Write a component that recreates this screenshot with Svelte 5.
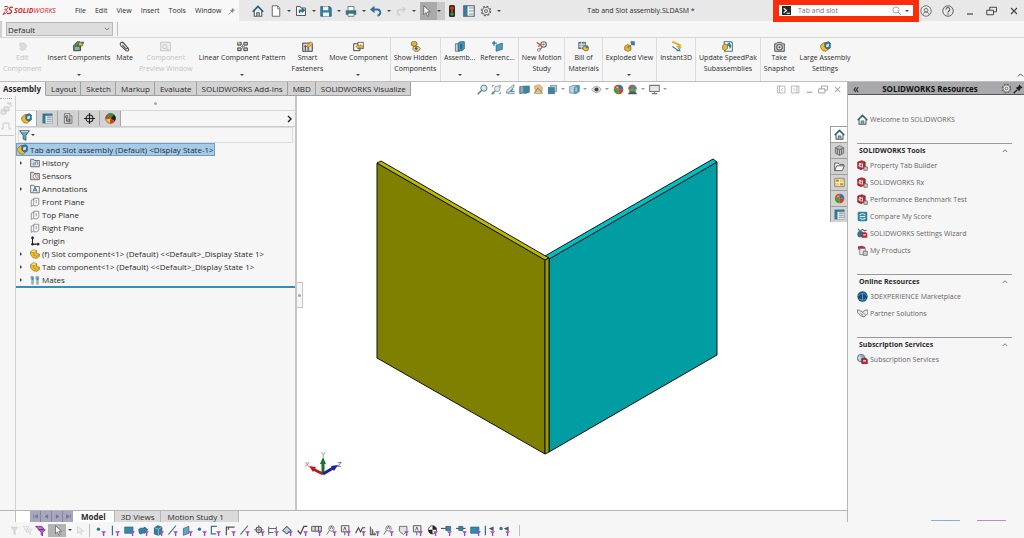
<script lang="ts">
	type Command = { icon: string; label: string; more?: boolean; off?: boolean };
	type TreeItem = { icon: string; label: string; open?: boolean };

	const purple = '<path d="M9 9h7l-2.500 3v4h-2v-4z" fill="#a445cf"/>';

	const icons: Record<string, string> = {
		home: '<path d="M3 8v7h10V8" fill="#fff" stroke="#555" stroke-width="1.500"/><path d="M1 9l7-7 7 7" fill="none" stroke="#1f5f7c" stroke-width="2.200"/><path d="M6 15v-5h4v5" fill="#8aa9b5" stroke="#555"/>',
		file: '<path d="M3 1h7l3 3v11H3z" fill="#fff" stroke="#666" stroke-width="1.300"/><path d="M10 1v4h3" fill="none" stroke="#666"/>',
		open: '<path d="M2 14V2h5l1 2h6v10z" fill="#fff" stroke="#555" stroke-width="1.300"/><path d="M5 11V6h4V3l5 4-5 4V9H7v2z" fill="#2b6f92"/>',
		save: '<path d="M1 2h12l2 2v11H1z" fill="#2f7da3" stroke="#285a72"/><path d="M4 2h7v5H4zM4 10h8v5H4z" fill="#eef3f5"/>',
		print: '<path d="M4 7V2h8v5" fill="#fff" stroke="#555"/><path d="M1 7h14v6H1z" fill="#2f7396"/><path d="M4 11h8v4H4z" fill="#fff" stroke="#555"/>',
		undo: '<path d="M4 6h6c5 0 5 8 0 8" fill="none" stroke="#2f6f93" stroke-width="2.400"/><path d="M6 1v10L0 6z" fill="#2f6f93"/>',
		redo: '<path d="M12 6H7c-5 0-5 7 0 7" fill="none" stroke="#cfcfcf" stroke-width="2"/><path d="M10 2v8l5-4z" fill="#cfcfcf"/>',
		cursor: '<path d="M5 1v12l3-3 2 5 2-1-2-5h4z" fill="#f6f6f6" stroke="#555"/>',
		traffic: '<rect x="4" y="0" width="8" height="16" rx="2" fill="#332a26"/><circle cx="8" cy="4" r="2.500" fill="#d9301c"/><circle cx="8" cy="8" r="1.500" fill="#806425"/><circle cx="8" cy="12" r="2.300" fill="#2f9a3c"/>',
		list: '<path d="M1 1h14v14H1z" fill="#f5f5f5" stroke="#4d6673" stroke-width="1.500"/><path d="M1 1h5v14H1z" fill="#38759a"/><path d="M8 4h6M8 8h6M8 12h6M3 4h1M3 8h1M3 12h1" stroke="#7b98a7" stroke-width="1.500"/>',
		gear: '<circle cx="8" cy="8" r="6" fill="none" stroke="#666" stroke-width="2" stroke-dasharray="2.700 2"/><circle cx="8" cy="8" r="5" fill="#eee" stroke="#666"/><circle cx="8" cy="8" r="2" fill="none" stroke="#666" stroke-width="1.300"/>',
		pin: '<path d="M9 2l5 5-3 1-2 4-5-5 4-2z" fill="#888"/><path d="M6 10l-5 5" stroke="#888" stroke-width="1.500"/>',
		darkPin: '<path d="M9 2l5 5-3 1-2 4-5-5 4-2z" fill="#222"/><path d="M6 10l-5 5" stroke="#222" stroke-width="2"/>',
		terminal: '<path d="M0 0h16v16H0z" fill="#262626"/><path d="M3 4l5 4-5 4M8 13h6" fill="none" stroke="#fff" stroke-width="1.800"/>',
		search: '<circle cx="7" cy="7" r="5.500" fill="none" stroke="#777" stroke-width="1.200"/><path d="M11 11l5 5" stroke="#777" stroke-width="1.400"/>',
		user: '<circle cx="8" cy="8" r="7" fill="none" stroke="#555"/><circle cx="8" cy="7" r="2.500" fill="none" stroke="#555"/><path d="M4 13c0-5 8-5 8 0" fill="none" stroke="#555"/>',
		help: '<circle cx="8" cy="8" r="7" fill="none" stroke="#555" stroke-width="1.200"/><path d="M5.500 6c0-4 5-3 5 0 0 2-2.500 2-2.500 4M8 11v2" fill="none" stroke="#555" stroke-width="1.400"/>',
		minimize: '<path d="M4 12h8" stroke="currentColor" stroke-width="1.600"/>',
		restore: '<path d="M1 7h9v6H1zM5 7V3h9v6h-4" fill="none" stroke="currentColor" stroke-width="1.300"/>',
		close: '<path d="M4 4l8 8M12 4l-8 8" stroke="currentColor" stroke-width="1.500"/>',
		dockLeft: '<path d="M2 3h11v10H2zM5 3v10M10 6L8 8l2 2" fill="none" stroke="currentColor"/>',
		dockRight: '<path d="M2 3h11v10H2zM10 3v10M5 6l2 2-2 2" fill="none" stroke="currentColor"/>',
		editPart: '<path d="M4 3h7l3 4-2 5-6 2-2-3 3-2-3-2z" fill="#ddd" stroke="#ccc"/>',
		insertPart: '<path d="M1 6h10v8H1z" fill="#e8efe9" stroke="#333" stroke-width="1.300"/><path d="M2 8h8v3l-2 3H2z" fill="#8fb39d" stroke="#264c39"/><path d="M3 4l3-3h4v5H3z" fill="#3fa36b" stroke="#264c39"/><path d="M8 2h6v5H8z" fill="#e9bb2f" stroke="#604d1d"/><path d="M12 1h4v3h-4z" fill="#2c87a8"/>',
		mate: '<path d="M5 2l8 8c3 4-1 6-4 3L3 7C0 3 4 0 7 3l5 6c1 2-1 3-2 2L5 6" fill="none" stroke="#555" stroke-width="1.600"/>',
		preview: '<path d="M1 2h14v12H1z" fill="#eee" stroke="#ccc" stroke-width="1.500"/><circle cx="7" cy="8" r="3" fill="none" stroke="#ccc" stroke-width="1.500"/><path d="M9 10l5 5" stroke="#ccc" stroke-width="1.500"/>',
		pattern: '<path d="M1 2h5v4H1zM1 10h5v4H1zM10 2h5v4h-5zM10 10h5v4h-5z" fill="#c5c9ca" stroke="#444" stroke-width="1.400"/><path d="M6 8h5M8 5v6" stroke="#3a7187"/><path d="M1 1h3v3H1z" fill="#e9b938"/>',
		smart: '<path d="M1 3h14v12H1z" fill="#d6d6d6" stroke="#444" stroke-width="1.400"/><path d="M5 6v8M9 8v6M3 8h4" stroke="#555" stroke-width="1.600"/><path d="M8 6l5-5 3 3-5 4-3 1z" fill="#f6b72a" stroke="#c87b19"/>',
		move: '<path d="M1 4h9v10H1z" fill="#fff" stroke="#333" stroke-width="1.300"/><path d="M7 2h8v9H7z" fill="#fff" stroke="#333"/><path d="M4 8l4-3v2h3V5l4 3-4 4v-2H8v2z" fill="#f0ba29" stroke="#76601e" stroke-width=".700"/>',
		hidden: '<path d="M2 2l4-2 4 2v4L6 8 2 6z" fill="#e7b434" stroke="#5d4d28"/><path d="M5 8h7l3 3-3 4H7l-3-3z" fill="#efd078" stroke="#555"/><circle cx="9" cy="11" r="2" fill="#555"/>',
		features: '<path d="M2 4h6v11H2z" fill="#ccd3d6" stroke="#555"/><path d="M6 3l3-2h6v10l-3 3H6z" fill="#4d98b8" stroke="#254e62"/><path d="M9 4h3v8H9z" fill="#206b8e"/>',
		reference: '<path d="M6 6l9-3v9l-9 3z" fill="#4b9dbd" stroke="#286079"/><path d="M3 0v7M0 3h7" stroke="#2879a0" stroke-width="2"/>',
		motion: '<circle cx="11" cy="5" r="4" fill="#eee" stroke="#666" stroke-width="1.600"/><circle cx="11" cy="5" r="1.500" fill="#b3603d"/><path d="M1 2l6 4-4 2M9 9l-5 5" stroke="#b3603d" stroke-width="1.800" fill="none"/><circle cx="4" cy="13" r="2" fill="#eee" stroke="#666"/>',
		bill: '<path d="M1 2h10v9H1z" fill="#75a6bb" stroke="#444"/><path d="M1 5h10M1 8h10M5 2v9" stroke="#e9eef0"/><path d="M7 9l3-2h4l2 3-2 4h-4l-3-2z" fill="#efbd35" stroke="#695623"/><path d="M10 7h4l1 3-3 1z" fill="#3184a6"/>',
		explode: '<path d="M1 8l4-3 5 2v6l-4 2-5-2z" fill="#efb830" stroke="#70591d"/><path d="M4 9l3-1v3" fill="none" stroke="#70591d"/><path d="M10 1h5v5l-4-1z" fill="#3989aa" stroke="#265b72"/><path d="M8 8l3-3" stroke="#555"/>',
		instant: '<path d="M2 1l11 5-3 2 5 2" fill="none" stroke="#e3ad2c" stroke-width="2.800"/><path d="M2 8l9 6M8 14l5 0-2-4" fill="none" stroke="#3c7f97" stroke-width="1.600"/>',
		speedpak: '<path d="M3 1h10l2 2v12H4z" fill="#fff" stroke="#3d7186" stroke-width="1.500"/><path d="M1 7l3-3 4 2v5l-4 3-3-2z" fill="#edb832" stroke="#665322"/><path d="M8 5c5-2 6 4 3 6M8 5l3-2v5z" fill="none" stroke="#2b7a9a" stroke-width="1.600"/>',
		camera: '<path d="M1 4h3l1-2h6l1 2h3v11H1z" fill="#ccc" stroke="#555" stroke-width="1.400"/><circle cx="8" cy="9" r="4" fill="#eee" stroke="#555" stroke-width="1.500"/><circle cx="8" cy="9" r="1.500" fill="#444"/>',
		assembly: '<path d="M1 6l5-4 3 1-1 5 3 2 2 1-4 4-5-1-3-4z" fill="#f1ba2c" stroke="#8b681c"/><path d="M7 3l5-2 3 2v7l-4 2-4-3z" fill="#347e9f" stroke="#245269"/><path d="M9 5l4-1v4l-4 1z" fill="#d7e7ed"/>',
		part: '<path d="M1 4l5-3 5 2-1 4 5 1v4l-4 3-6-1-4-5z" fill="#f2bf31" stroke="#8b681c"/><path d="M1 4l5 2 5-3M6 6v4l5 2 4-4" fill="none" stroke="#a77d1f"/><path d="M2 4l4-2 4 1-4 2z" fill="#ffe383"/>',
		tree: '<path d="M1 1h14v14H1z" fill="#eee" stroke="#8ba0a8"/><path d="M1 1h14v3H1zM1 4h4v11H1z" fill="#2f7595"/><path d="M7 6h7M7 9h7M7 12h7" stroke="#8199a4" stroke-width="1.500"/>',
		config: '<path d="M2 1h8v14H2zM10 4h3v11H6" fill="#ddd" stroke="#777" stroke-width="1.400"/><path d="M4 4h3v3H4zM7 9h3v3H7zM5 7v5h2" fill="none" stroke="#555" stroke-width="1.300"/>',
		target: '<circle cx="8" cy="8" r="5" fill="none" stroke="#222" stroke-width="1.600"/><path d="M8 0v16M0 8h16" stroke="#222" stroke-width="1.600"/>',
		ball: '<circle cx="8" cy="8" r="7" fill="#e5c727"/><path d="M8 8V1a7 7 0 0 0-6.500 5z" fill="#d83c32"/><path d="M8 8V1a7 7 0 0 1 7 7z" fill="#3870bd"/><path d="M8 8h7a7 7 0 0 1-7 7z" fill="#d83c32"/><path d="M8 8v7a7 7 0 0 1-6.500-9z" fill="#3b9d4b"/><circle cx="6" cy="5" r="1.500" fill="#fff" opacity=".600"/>',
		appearance: '<circle cx="8" cy="8" r="7" fill="#e9cb2c" stroke="#555"/><path d="M8 8L3 2a7 7 0 0 1 10 0z" fill="#3b8d3f"/><path d="M8 8l5-6a7 7 0 0 1 1 10z" fill="#222"/><path d="M8 8L3 2a7 7 0 0 0-2 7z" fill="#d13a30"/><path d="M8 8l6 4a7 7 0 0 1-7 3z" fill="#d13a30"/>',
		filter: '<path d="M1 1h14l-5 7v7l-4-2V8z" fill="#71a2b8" stroke="#315a6c" stroke-width="1.300"/><path d="M3 2h10" stroke="#fff"/>',
		history: '<path d="M1 14V2h5l1 2h8v10z" fill="#ddd" stroke="#666" stroke-width="1.400"/><path d="M5 11V8h3v3zM9 11V6h3v5" fill="#fff" stroke="#397692"/>',
		sensors: '<path d="M1 14V2h5l1 2h8v10z" fill="#ddd" stroke="#666" stroke-width="1.400"/><circle cx="9" cy="9" r="4" fill="#fff" stroke="#8a5656"/><path d="M9 6v4h2" stroke="#b34242" fill="none"/>',
		notes: '<path d="M1 14V2h5l1 2h8v10z" fill="#e9eef0" stroke="#666" stroke-width="1.400"/><path d="M5 12l3-7 3 7M6 10h4" fill="none" stroke="#2d6b88" stroke-width="1.500"/>',
		plane: '<path d="M2 5l4-1v9l-4 2zM6 2h8v10l-3 2H6" fill="#fafafa" stroke="#777" stroke-width="1.200"/><path d="M6 2v3M10 5v5" stroke="#777" stroke-width="1.200"/>',
		origin: '<path d="M4 1v12h11M4 1L2 4M4 1l2 3M15 13l-3-2M15 13l-3 2" fill="none" stroke="#222" stroke-width="1.700"/><circle cx="4" cy="13" r="2" fill="#222"/>',
		mates: '<path d="M3 1c5 0 4 5 3 7v6c0 2-4 2-4 0V8C0 5 0 1 3 1zM11 1c5 0 4 5 3 7v6c0 2-4 2-4 0V8c-2-3-2-7 1-7z" fill="#91afbd"/><path d="M3 4h2v4H3zM11 4h2v4h-2z" fill="#4c829b"/>',
		zoomFit: '<circle cx="10" cy="6" r="4.500" fill="#dceaf0" stroke="#5a7a89" stroke-width="1.400"/><path d="M7 9l-6 6" stroke="#5a7a89" stroke-width="2"/>',
		zoomArea: '<path d="M2 5V2h3M11 2h3v3M2 11v3h3M14 11v3h-3" fill="none" stroke="#777"/><circle cx="9" cy="7" r="4" fill="#dceaf0" stroke="#6c8793"/><path d="M6 10l-5 5" stroke="#5a7a89" stroke-width="2"/>',
		prevView: '<path d="M13 1L3 9l-1 4 4-1 7-8zM4 14h10" fill="#dfeaf0" stroke="#718b97" stroke-width="1.300"/><path d="M12 7l-4 4h6" fill="none" stroke="#4a8fae" stroke-width="1.700"/>',
		section: '<path d="M1 4l6-1v10l-6 1z" fill="#6b9bb1" stroke="#416474"/><path d="M8 3h7v9l-7 2z" fill="#3687ac" stroke="#416474"/><path d="M4 4v8" stroke="#cce"/>',
		dynamic: '<path d="M2 3l7-2 5 4-2 9H4z" fill="#f5c072" stroke="#b39468"/><path d="M2 14l5-8 3 3 4 5" fill="none" stroke="#8095a0" stroke-width="1.600"/>',
		orient: '<path d="M2 5h9v9H2z" fill="#3686aa" stroke="#405e6c"/><path d="M5 2h9v9h-3V5H5z" fill="#b9d3df" stroke="#567987"/>',
		display: '<path d="M1 4l5-2h9v9l-5 3-9-1z" fill="#bcd7e2" stroke="#577784"/><path d="M7 5l4-3h4v9l-5 3H7z" fill="#5595b1"/><path d="M9 5h3v6H9z" fill="#9fc6d6"/>',
		eye: '<path d="M1 8c4-6 10-6 14 0-4 6-10 6-14 0z" fill="#e3e3e3" stroke="#888"/><circle cx="8" cy="8" r="3" fill="#444"/>',
		scene: '<circle cx="8" cy="7" r="6" fill="#56a75b"/><path d="M8 7V1a6 6 0 0 1 6 6z" fill="#4682c1"/><path d="M8 7V1a6 6 0 0 0-6 6z" fill="#d7473c"/><path d="M1 15l3-4h8l3 4z" fill="#555"/>',
		monitor: '<path d="M1 2h14v9H1zM8 11v3M4 14h8" fill="#e7e7e7" stroke="#777" stroke-width="1.500"/>',
		library: '<path d="M2 4l6-3 6 3v8l-6 3-6-3z" fill="#b7b7b7" stroke="#555"/><path d="M2 4l6 3 6-3M8 7v8M5 5v8M11 5v8" fill="none" stroke="#555"/>',
		folder: '<path d="M1 14V3h5l2 2h6v2M1 14l3-7h11l-3 7z" fill="#f7f7f7" stroke="#555" stroke-width="1.300"/>',
		palette: '<path d="M1 2h14v12H1z" fill="#ead079" stroke="#777"/><path d="M3 4h4v3H3zM9 9h4v3H9z" fill="#c4961a"/><path d="M8 3v10M2 8h12" stroke="#fff"/>',
		redCube: '<path d="M1 3l6-2 5 2v8l-6 3-5-2z" fill="#b82a35" stroke="#7b1f28"/><path d="M3 5h3v2H3v2h3v2M8 5v6" fill="none" stroke="#fff" stroke-width="1.200"/><path d="M10 10h5v5h-5z" fill="#ccc" stroke="#555"/>',
		score: '<rect x="1" y="1" width="14" height="14" rx="2" fill="#36839f"/><path d="M4 6c2-3 6-2 8 0M12 10c-2 3-6 2-8 0M4 8h8" stroke="#d3eef6" stroke-width="1.500" fill="none"/>',
		wizard: '<path d="M2 1l2 4 4-3 3 2 3-1" fill="none" stroke="#666" stroke-width="1.700"/><circle cx="5" cy="9" r="4.500" fill="#33748c"/><path d="M7 6h6l2 2v6H7z" fill="#b92937"/><path d="M9 10h4" stroke="#fff" stroke-width="1.500"/>',
		products: '<path d="M1 2l6-1 5 2v4H2z" fill="#b92e3b"/><path d="M4 5h8v9H4z" fill="#ececec" stroke="#666"/><path d="M9 9h6v6H9z" fill="#ccc" stroke="#555"/>',
		globe: '<circle cx="8" cy="8" r="7.500" fill="#164f7a"/><path d="M2 7c4-5 8-5 12 0M3 11c3 3 7 3 10 0M8 3v10" stroke="#5fa4ca" fill="none" stroke-width="1.300"/>',
		partner: '<path d="M0 3h3l5 3 4-3h4v5l-6 5-5-2-4-4z" fill="#e7e7e7" stroke="#666" stroke-width="1.200"/><path d="M5 8l4 3M8 6l4 4" stroke="#666"/>',
		subscription: '<circle cx="6" cy="6" r="5.500" fill="#8fb0c0" stroke="#42677b"/><path d="M4 2v8M1 6h9" stroke="#eef" stroke-width="1.300"/><path d="M7 6h6l2 2v6H7z" fill="#ba2937" stroke="#711b24"/><path d="M9 9h4v2H9z" fill="#eee"/>',
		ghostFunnel: '<path d="M3 3h10l-4 5v6l-2-1V8z" fill="#ddd" stroke="#ccc"/>',
		ghostSheets: '<path d="M2 2h8l-3 5v4zM8 6h7l-3 4v4z" fill="#f1f1f1" stroke="#ccc"/>',
		purpleSheets: '<path d="M1 2h9l3 4-7 1zM5 7h10l-4 4v5l-2-2v-4z" fill="#c268d8" stroke="#71328a" stroke-width="1.300"/>',
		ghostCursor: '<path d="M5 2v10l3-2 3 4-1-5h4z" fill="#ececec" stroke="#ccc"/>',
		fVertex: '<circle cx="5" cy="6" r="2.500" fill="#2e7798"/>' + purple,
		fEdge: '<path d="M5 1v14" stroke="#35718b" stroke-width="1.800"/>' + purple,
		fFace: '<path d="M1 3h12v9H1z" fill="#358bad" stroke="#275c72"/>' + purple,
		fSurface: '<path d="M1 7c3-5 5 0 9-4l4 4-4 5c-4-2-5 3-8 0z" fill="#2f839f" stroke="#24556a"/>' + purple,
		fSolid: '<path d="M2 4l5-3 6 2v9l-5 3-6-2z" fill="#327f9f" stroke="#234b5d"/><path d="M2 4l6 2 5-3M8 6v9" stroke="#a5d0df" fill="none"/>' + purple,
		fAxis: '<path d="M2 14L13 1" stroke="#4c7383" stroke-width="1.500"/>' + purple,
		fPlane: '<path d="M2 5l8-3v10l-8 3z" fill="#62a6bd" stroke="#385c6b"/>' + purple,
		fSketch: '<path d="M10 2H2v11h7" fill="none" stroke="#397b97" stroke-width="1.800"/>' + purple,
		fSegment: '<path d="M2 15V3h12M5 3v4" fill="none" stroke="#555" stroke-width="1.800"/>' + purple,
		fMid: '<circle cx="7" cy="7" r="4" fill="#eee" stroke="#555" stroke-width="1.500"/><path d="M7 0v14M0 7h14" stroke="#555"/>' + purple,
		fDimension: '<path d="M1 2v12M12 2v7M1 5h11M1 11h7" stroke="#666" stroke-width="1.500"/>' + purple,
		fHatch: '<path d="M1 8l6-6 6 6-6 5z" fill="#c0d5dd" stroke="#40616d" stroke-width="1.500"/>' + purple,
		fFinish: '<path d="M1 8l4 5L10 2h5" fill="none" stroke="#444" stroke-width="1.800"/>' + purple,
		fTolerance: '<path d="M1 2h14v7H1zM6 2v7M11 2v7" fill="#ddd" stroke="#555" stroke-width="1.400"/>' + purple,
		fNote: '<circle cx="8" cy="5" r="4" fill="#eee" stroke="#666"/><path d="M5 8l-4 6M6 6l2-4 2 4" stroke="#444" fill="none"/>' + purple,
		fDatum: '<path d="M2 1h11v9H2zM7 10v5" fill="#eee" stroke="#555" stroke-width="1.400"/><path d="M5 8l2-5 2 5" stroke="#333" fill="none"/>' + purple,
		fWeld: '<path d="M1 12L5 4l3 6 3-6h4" fill="none" stroke="#444" stroke-width="1.600"/>' + purple,
		fBlock: '<path d="M2 2v12h8M5 6v7h5" fill="#bbb" stroke="#666" stroke-width="1.500"/>' + purple,
		fShield: '<path d="M2 2h11v7l-5 5-6-5z" fill="#e3e3e3" stroke="#666" stroke-width="1.300"/>' + purple,
		fMass: '<circle cx="8" cy="7" r="6" fill="#fff" stroke="#222"/><path d="M8 7V1a6 6 0 0 1 6 6zM8 7v6a6 6 0 0 1-6-6z" fill="#222"/>' + purple,
		fRoute: '<path d="M0 5h7" stroke="#555" stroke-width="1.600"/><path d="M7 2h7v6H7z" fill="#3b83a0" stroke="#31586a"/>' + purple,
		fPoint: '<path d="M0 5h14" stroke="#555" stroke-width="1.600"/><path d="M4 2h6v6H4z" fill="#3b83a0" stroke="#31586a"/>' + purple,
		fEdgeFlag: '<path d="M2 1v14" stroke="#35718b" stroke-width="1.800"/><path d="M14 2v7L7 5z" fill="#555"/>' + purple,
		fVertexFlag: '<circle cx="3" cy="5" r="2.500" fill="#2e7798"/><path d="M14 2v7L7 5z" fill="#555"/>' + purple
	};

	const menus = ['File', 'Edit', 'View', 'Insert', 'Tools', 'Window'];

	const quick = [
		{ icon: 'file', label: 'New' },
		{ icon: 'open', label: 'Open' },
		{ icon: 'save', label: 'Save' },
		{ icon: 'print', label: 'Print' },
		{ icon: 'undo', label: 'Undo' },
		{ icon: 'redo', label: 'Redo' },
		{ icon: 'cursor', label: 'Select', active: true }
	];

	const ribbon: Command[][] = [
		[
			{ icon: 'editPart', label: 'Edit\nComponent', off: true },
			{ icon: 'insertPart', label: 'Insert Components', more: true },
			{ icon: 'mate', label: 'Mate' },
			{ icon: 'preview', label: 'Component\nPreview Window', off: true },
			{ icon: 'pattern', label: 'Linear Component Pattern', more: true },
			{ icon: 'smart', label: 'Smart\nFasteners' },
			{ icon: 'move', label: 'Move Component', more: true }
		],
		[{ icon: 'hidden', label: 'Show Hidden\nComponents' }],
		[
			{ icon: 'features', label: 'Assemb...', more: true },
			{ icon: 'reference', label: 'Referenc...', more: true }
		],
		[{ icon: 'motion', label: 'New Motion\nStudy' }],
		[{ icon: 'bill', label: 'Bill of\nMaterials' }],
		[{ icon: 'explode', label: 'Exploded View', more: true }],
		[{ icon: 'instant', label: 'Instant3D' }],
		[{ icon: 'speedpak', label: 'Update SpeedPak\nSubassemblies' }],
		[
			{ icon: 'camera', label: 'Take\nSnapshot' },
			{ icon: 'assembly', label: 'Large Assembly\nSettings' }
		]
	];

	const tabs = ['Assembly', 'Layout', 'Sketch', 'Markup', 'Evaluate', 'SOLIDWORKS Add-Ins', 'MBD', 'SOLIDWORKS Visualize'];

	const viewTools = [
		{ icon: 'zoomFit' },
		{ icon: 'zoomArea' },
		{ icon: 'prevView' },
		{ icon: 'section' },
		{ icon: 'dynamic' },
		{ icon: 'orient', more: true },
		{ icon: 'display', more: true },
		{ icon: 'eye', more: true },
		{ icon: 'ball' },
		{ icon: 'scene', more: true },
		{ icon: 'monitor', more: true }
	];

	const managers = ['assembly', 'tree', 'config', 'target', 'appearance'];

	const tree: TreeItem[] = [
		{ icon: 'history', label: 'History', open: true },
		{ icon: 'sensors', label: 'Sensors' },
		{ icon: 'notes', label: 'Annotations', open: true },
		{ icon: 'plane', label: 'Front Plane' },
		{ icon: 'plane', label: 'Top Plane' },
		{ icon: 'plane', label: 'Right Plane' },
		{ icon: 'origin', label: 'Origin' },
		{ icon: 'part', label: '(f) Slot component<1> (Default) <<Default>_Display State 1>', open: true },
		{ icon: 'part', label: 'Tab component<1> (Default) <<Default>_Display State 1>', open: true },
		{ icon: 'mates', label: 'Mates', open: true }
	];

	const paneTabs = ['home', 'library', 'folder', 'palette', 'ball', 'tree'];

	const sections = [
		{
			title: 'SOLIDWORKS Tools',
			links: [
				['redCube', 'Property Tab Builder'],
				['redCube', 'SOLIDWORKS Rx'],
				['redCube', 'Performance Benchmark Test'],
				['score', 'Compare My Score'],
				['wizard', 'SOLIDWORKS Settings Wizard'],
				['products', 'My Products']
			]
		},
		{
			title: 'Online Resources',
			links: [
				['globe', '3DEXPERIENCE Marketplace'],
				['partner', 'Partner Solutions']
			]
		},
		{
			title: 'Subscription Services',
			links: [['subscription', 'Subscription Services']]
		}
	];

	const filters = [
		'fVertex', 'fEdge', 'fFace', 'fSurface', 'fSolid', 'fAxis', 'fPlane', 'fVertex', 'fSketch', 'fSegment',
		'fAxis', 'fMid', 'fDimension', 'fHatch', 'fFinish', 'fTolerance', 'fNote', 'fDatum', 'fWeld', 'fBlock',
		'fNote', 'fShield', 'fDatum', 'fMass', 'fRoute', 'fPoint', 'fFace', 'fEdgeFlag', 'fVertexFlag'
	];

	let query = $state('Tab and slot');
	let config = $state('Default');
</script>

{#snippet icon(name: string)}
	<svg class="icon" viewBox="0 0 16 16" aria-hidden="true">{@html icons[name]}</svg>
{/snippet}

<div class="app">
	<header class="titlebar">
		<div class="brand">
			<svg class="ds" viewBox="0 0 24 20" aria-hidden="true">
				<path d="M5 2h6c3 1 0 5-4 7 5 0 4 4 0 7l-5 2 4-6M5 9l3-3" fill="none" stroke="#d5292c" stroke-width="2" />
				<path d="M22 4c-7-2-9 3-5 5 5 3 1 8-7 7" fill="none" stroke="#d5292c" stroke-width="2.5" />
			</svg>
			<span class="logo"><b>SOLID</b>WORKS</span>
			<nav>
				{#each menus as menu}
					<button>{menu}</button>
				{/each}
			</nav>
			<span class="small">{@render icon('pin')}</span>
		</div>
		<div class="quick">
			<button class="home" aria-label="Home">{@render icon('home')}</button>
			{#each quick as tool}
				<button class="drop" class:active={tool.active} aria-label={tool.label}>
					{@render icon(tool.icon)}<i class="arrow"></i>
				</button>
			{/each}
			<div class="options">
				<button aria-label="Rebuild">{@render icon('traffic')}</button>
				<button aria-label="File properties">{@render icon('list')}</button>
				<button class="drop" aria-label="Options">{@render icon('gear')}<i class="arrow"></i></button>
			</div>
		</div>
		<h1>Tab and Slot assembly.SLDASM *</h1>
		<label class="search">
			{@render icon('terminal')}
			<input type="text" aria-label="Search" bind:value={query} />
			{@render icon('search')}<i class="arrow"></i>
		</label>
		<div class="window">
			{#each ['user', 'help', 'minimize', 'restore', 'close'] as name}
				<button aria-label={name}>{@render icon(name)}</button>
			{/each}
		</div>
	</header>

	<div class="configbar">
		<div class="select">
			<select aria-label="Configuration" bind:value={config}>
				<option>Default</option>
			</select>
			<svg viewBox="0 0 8 5" aria-hidden="true"><path d="M1 1l3 3 3-3" fill="none" stroke="#666" /></svg>
		</div>
	</div>

	<div class="ribbon">
		{#each ribbon as group}
			<div class="group">
				{#each group as command}
					<button class="command" class:off={command.off} disabled={command.off}>
						{@render icon(command.icon)}
						<span class="label">{command.label}</span>
						{#if command.more}<i class="arrow"></i>{/if}
					</button>
				{/each}
			</div>
		{/each}
		<button class="collapse" aria-label="Collapse">
			<svg viewBox="0 0 8 5" aria-hidden="true"><path d="M1 4l3-3 3 3" fill="none" stroke="#444" /></svg>
		</button>
	</div>

	<main>
		<div class="document">
			<div class="tabrow">
				<div class="tabs">
					{#each tabs as tab, i}
						<button class:current={i === 0}>{tab}</button>
					{/each}
				</div>
				<div class="viewtools">
					{#each viewTools as tool}
						<button aria-label={tool.icon}>
							{@render icon(tool.icon)}
							{#if tool.more}<i class="arrow"></i>{/if}
						</button>
					{/each}
				</div>
				<div class="doccontrols">
					{#each ['dockLeft', 'dockRight', 'minimize', 'restore', 'close'] as name}
						<button aria-label={name}>{@render icon(name)}</button>
					{/each}
				</div>
			</div>

			<div class="workspace">
				<aside class="strip">
					<svg viewBox="0 0 12 32" aria-hidden="true">
						<path d="M1 11h5v4H1zM4 8h5v4H4zM7 4h4v4" fill="#e5e5e5" stroke="#ccc" />
						<path d="M1 30h2v-6h6v6h2" fill="none" stroke="#ccc" />
					</svg>
				</aside>
				<section class="manager">
					<div class="splitter"><span></span></div>
					<div class="managertabs">
						{#each managers as name, i}
							<button class:current={i === 0} aria-label={name}>{@render icon(name)}</button>
						{/each}
						<button class="next" aria-label="More">
							<svg viewBox="0 0 5 8" aria-hidden="true"><path d="M1 1l3 3-3 3" fill="none" stroke="#222" stroke-width="1.4" /></svg>
						</button>
					</div>
					<button class="filter" aria-label="Filter">{@render icon('filter')}<i class="arrow"></i></button>
					<button class="root">
						{@render icon('assembly')}Tab and Slot assembly (Default) &lt;Display State-1&gt;
					</button>
					<ul class="tree">
						{#each tree as item}
							<li>
								<i class:expand={item.open}></i>
								{@render icon(item.icon)}
								<span>{item.label}</span>
							</li>
						{/each}
					</ul>
					<button class="handle" aria-label="Hide tree"><span></span></button>
				</section>
				<div class="viewport">
					<svg class="model" viewBox="297 96 533 414" role="img" aria-label="Tab and slot model">
						<g stroke="#111" stroke-width="1" stroke-linejoin="round">
							<path d="M549 259L717 162V355L549 452z" fill="#009da3" />
							<path d="M545 256L713 159L717 162L549 259z" fill="#00bfc4" />
							<path d="M377 163L545 260V454L377 358z" fill="#808000" />
							<path d="M377 163L381 161L549 258L545 260z" fill="#b9ba00" />
							<path d="M545 260L549 258V452L545 454z" fill="#9c9c00" />
						</g>
						<g fill="none" stroke-width="3">
							<path d="M323 474l-10-5" stroke="#b3201e" />
							<path d="M323 474v-12" stroke="#177622" />
							<path d="M323 474l10-6" stroke="#1f1fa0" />
						</g>
						<path d="M309 466l7 1-3 5z" fill="#b3201e" />
						<path d="M320 464l3-7 3 7z" fill="#177622" />
						<path d="M338 465l-7 1 3 5z" fill="#1f1fa0" />
						<g class="axes">
							<text x="305" y="467" fill="#e04a4a">X</text>
							<text x="321" y="457" fill="#3f9345">Y</text>
							<text x="337" y="467" fill="#3939d8">Z</text>
						</g>
					</svg>
					<div class="panetabs">
						{#each paneTabs as name, i}
							<button class:current={i === 0} aria-label={name}>{@render icon(name)}</button>
						{/each}
					</div>
				</div>
			</div>

			<div class="sheets">
				<div class="sheetbox">
					<div class="pager">
						{#each ['M7 1L3 4l4 3zM1 1v6', 'M6 1L2 4l4 3z', 'M2 1l4 3-4 3z', 'M1 1l4 3-4 3zM7 1v6'] as d}
							<button aria-label="Scroll tabs">
								<svg viewBox="0 0 8 8" aria-hidden="true"><path {d} fill="#73738c" stroke="#73738c" /></svg>
							</button>
						{/each}
					</div>
					<button class="current">Model</button>
					<button>3D Views</button>
					<button>Motion Study 1</button>
				</div>
			</div>
		</div>

		<aside class="pane">
			<header>
				<span class="back">«</span>
				<h2>SOLIDWORKS Resources</h2>
				{@render icon('gear')}
				{@render icon('darkPin')}
			</header>
			<div class="panebody">
				<a class="welcome" href="#welcome">{@render icon('home')}Welcome to SOLIDWORKS</a>
				{#each sections as section}
					<section>
						<h3>
							{section.title}
							<svg viewBox="0 0 8 5" aria-hidden="true"><path d="M1 4l3-3 3 3" fill="none" stroke="#555" /></svg>
						</h3>
						{#each section.links as [name, text]}
							<a href="#resources">{@render icon(name)}{text}</a>
						{/each}
					</section>
				{/each}
			</div>
			<div class="legend"><span></span><span></span></div>
		</aside>
	</main>

	<footer>
		<div class="selection">
			<button aria-label="Filter off">{@render icon('ghostFunnel')}</button>
			<button aria-label="Clear filters">{@render icon('ghostSheets')}</button>
			<button aria-label="All filters">{@render icon('purpleSheets')}</button>
			<button class="active" aria-label="Select">{@render icon('cursor')}</button>
			<i class="arrow"></i>
			<button aria-label="Magnify">{@render icon('ghostCursor')}</button>
		</div>
		<div class="filters">
			{#each filters as name}
				<button aria-label={name}>{@render icon(name)}</button>
			{/each}
		</div>
	</footer>
</div>

<style>
	:global(body) {
		margin: 0;
	}

	.app {
		--bg: #f6f6f6;
		--line: #bdbdbd;
		--tab: #d2d2d2;

		display: flex;
		flex-direction: column;
		min-height: 100vh;
		background: var(--bg);
		color: #2b2b2b;
		font: 7px/11px 'Open Sans', 'Noto Sans', sans-serif;
		white-space: nowrap;
	}

	button,
	input,
	select {
		font: inherit;
		color: inherit;
		margin: 0;
		padding: 0;
		border: 0;
		background: none;
	}

	button {
		display: flex;
		align-items: center;
		justify-content: center;
	}

	h1,
	h2,
	h3,
	ul {
		margin: 0;
		padding: 0;
		font-size: inherit;
		font-weight: 400;
	}

	.icon {
		display: block;
		flex: none;
		width: 11px;
		height: 11px;
	}

	.arrow {
		flex: none;
		border: 2px solid transparent;
		border-top-color: #444;
		border-bottom: 0;
	}

	/* Title bar */
	.titlebar {
		display: flex;
		height: 21px;
		background: #e8e8e8;
	}

	.brand {
		display: flex;
		align-items: center;
		width: 237px;
		padding-left: 2px;
		background: #f8f8f8;
	}

	.ds {
		width: 12px;
		height: 11px;
	}

	.logo {
		color: #d5292c;
		font-style: italic;
	}

	nav {
		display: flex;
		gap: 9px;
		margin-left: 19px;
	}

	.small {
		margin-left: 7px;
	}

	.small .icon {
		width: 8px;
		height: 8px;
	}

	.quick {
		display: flex;
		align-items: center;
		padding-left: 13px;
	}

	.quick .icon,
	.window .icon {
		width: 12px;
		height: 12px;
	}

	.home {
		margin-right: 6px;
	}

	.drop {
		width: 25px;
		height: 18px;
		justify-content: flex-start;
	}

	.drop .arrow {
		margin-left: 5px;
	}

	.drop.active {
		background: linear-gradient(90deg, #aaa 17px, #c8c8c8 17px);
	}

	.options {
		display: flex;
		align-items: center;
		gap: 5px;
		margin-left: 1px;
	}

	h1 {
		flex: 1;
		align-self: center;
		padding-left: 4px;
		text-align: center;
	}

	.search {
		display: flex;
		align-items: center;
		box-sizing: border-box;
		width: 146px;
		height: 22px;
		padding: 0 4px 0 3px;
		border: solid #fb2c0a;
		border-width: 5px 6px 6px;
		background: #fff;
		z-index: 1;
	}

	.search .icon {
		width: 9px;
		height: 9px;
	}

	.search input {
		flex: 1;
		min-width: 0;
		padding-left: 7px;
		color: #777;
		outline: 0;
	}

	.search .arrow {
		margin-left: 4px;
	}

	.window {
		display: flex;
		align-items: center;
		gap: 10px;
		padding: 0 4px 0 1px;
		color: #444;
	}

	/* Configuration drop-down */
	.configbar {
		display: flex;
		align-items: center;
		height: 16px;
		border-bottom: 1px solid #d6d6d6;
		border-left: 2px solid #d0d0d0;
	}

	.select {
		position: relative;
		width: 116px;
		padding: 0 4px;
		border-right: 1px solid var(--line);
		box-sizing: border-box;
	}

	select {
		display: block;
		box-sizing: border-box;
		width: 100%;
		height: 14px;
		padding-left: 1px;
		border: 1px solid #b8b8b8;
		background: #dcdcdc;
		font-size: 8px;
		appearance: none;
	}

	.select svg {
		position: absolute;
		top: 5px;
		right: 7px;
		width: 6px;
	}

	/* Ribbon */
	.ribbon {
		display: flex;
		height: 43px;
		border-bottom: 1px solid var(--line);
	}

	.group {
		display: flex;
		gap: 5px;
		padding: 0 3px;
		border-right: 1px solid #dcdcdc;
	}

	.group:first-child {
		gap: 6px;
		padding-right: 2px;
	}

	.group:nth-last-child(2) {
		border: 0;
	}

	.command {
		flex-direction: column;
		justify-content: flex-start;
		padding-top: 3px;
	}

	.command .label {
		white-space: pre;
	}

	.command .arrow {
		margin-top: auto;
		margin-bottom: 5px;
	}

	.off {
		color: #c4c4c4;
	}

	.collapse {
		margin-left: auto;
		align-items: flex-end;
		padding-bottom: 4px;
	}

	.collapse svg {
		width: 7px;
	}

	main {
		display: flex;
		flex: 1;
	}

	.document {
		display: flex;
		flex: 1;
		flex-direction: column;
		background: #fff;
	}

	.tabrow {
		display: flex;
		align-items: center;
		height: 14px;
	}

	.tabs {
		display: flex;
		height: 14px;
		font-size: 8px;
	}

	.tabs button {
		padding: 0 4px 0 5px;
		border: solid #a0a0a0;
		border-width: 0 1px 1px 0;
		background: var(--tab);
	}

	.tabs .current {
		padding-left: 3px;
		border-bottom-color: var(--bg);
		background: var(--bg);
		font-weight: 700;
	}

	.viewtools {
		display: flex;
		gap: 3px;
		margin-left: 66px;
	}

	.viewtools button {
		gap: 3px;
	}

	.viewtools .arrow {
		margin-right: 1px;
		border-top-color: #999;
	}

	.doccontrols {
		display: flex;
		gap: 3px;
		margin-left: auto;
		margin-right: 4px;
		color: #999;
	}

	.workspace {
		display: flex;
		flex: 1;
	}

	.strip {
		width: 15px;
		border-right: 1px solid #d2d2d2;
		background: linear-gradient(#c8c8c8, #c8c8c8) 0 39px / 14px 1px no-repeat var(--bg);
	}

	.strip svg {
		display: block;
		width: 12px;
		margin-top: 2px;
		border-top: 1px dotted #aaa;
	}

	/* Feature manager */
	.manager {
		position: relative;
		display: flex;
		flex-direction: column;
		width: 279px;
		border-right: 2px solid #c6c6c6;
		background: var(--bg);
	}

	.splitter {
		display: flex;
		align-items: center;
		justify-content: center;
		height: 14px;
		border-bottom: 1px solid #d6d6d6;
	}

	.splitter span {
		width: 3px;
		height: 3px;
		border-radius: 50%;
		background: #aaa;
	}

	.managertabs {
		display: flex;
		height: 15px;
		border-bottom: 1px solid #ccc;
	}

	.managertabs button {
		width: 21px;
		border-right: 1px solid #a6a6a6;
		background: var(--tab);
	}

	.managertabs .current {
		background: #fbfbfb;
	}

	.managertabs .next {
		margin-left: auto;
		width: 12px;
		border: 0;
		background: none;
	}

	.next svg {
		width: 5px;
	}

	.filter {
		gap: 1px;
		justify-content: flex-start;
		height: 16px;
		margin: 0 2px;
		border: 1px solid #dcdcdc;
	}

	.root {
		align-self: flex-start;
		gap: 2px;
		height: 13px;
		border: 1px solid #6f9fc4;
		background: #a5cbea;
		font-size: 8px;
	}

	.tree {
		list-style: none;
		border-bottom: 2px solid #2f8fc3;
		font-size: 8px;
	}

	.tree li {
		display: flex;
		align-items: center;
		height: 13px;
	}

	.tree i {
		width: 10px;
		margin-left: 4px;
	}

	.tree .expand::before {
		content: '';
		display: block;
		width: 0;
		border: 2px solid transparent;
		border-left-color: #444;
		border-right: 0;
	}

	.tree span {
		margin-left: 2px;
	}

	.tree .icon {
		width: 10px;
		height: 10px;
	}

	.handle {
		position: absolute;
		top: 186px;
		right: -8px;
		width: 7px;
		height: 26px;
		border: 1px solid #c6c6c6;
		background: var(--bg);
	}

	.handle span {
		width: 3px;
		height: 3px;
		border-radius: 50%;
		background: #aaa;
	}

	.viewport {
		display: flex;
		flex: 1;
		min-width: 0;
	}

	.model {
		flex: 1;
		min-width: 0;
		height: 100%;
	}

	.axes {
		font-size: 8px;
	}

	.panetabs {
		width: 17px;
		margin-top: 30px;
	}

	.panetabs button {
		box-sizing: border-box;
		width: 17px;
		height: 16px;
		border: solid #9c9c9c;
		border-width: 1px 0 0 1px;
		background: var(--tab);
	}

	.panetabs .current {
		background: #fff;
	}

	/* Sheet tabs */
	.sheets {
		height: 11px;
		padding-left: 15px;
		border-top: 1px solid #b5b5b5;
		background: var(--bg);
	}

	.sheetbox {
		display: flex;
		float: left;
		height: 11px;
		padding-left: 14px;
		border-left: 1px solid var(--line);
		background: #fff;
		font-size: 8px;
	}

	.sheetbox > button {
		padding: 0 6px;
		border-right: 1px solid #b5b5b5;
		background: #dadada;
	}

	.sheetbox > button:last-child {
		padding-right: 14px;
	}

	.sheetbox > .current {
		padding: 0 8px;
		background: #fff;
		font-weight: 700;
	}

	.pager {
		display: flex;
		gap: 1px;
		background: #8585a5;
	}

	.pager button {
		width: 10px;
		background: #a6a6bd;
	}

	.pager svg {
		width: 5px;
	}

	/* Task pane */
	.pane {
		display: flex;
		flex-direction: column;
		width: 176px;
		border-left: 1px solid #b5b5b5;
	}

	.pane header {
		display: flex;
		align-items: center;
		gap: 1px;
		height: 12px;
		padding-left: 5px;
		border-bottom: 1px solid #555;
		background: #a9a9ad;
		color: #111;
		font-size: 8px;
	}

	.back {
		font-size: 12px;
	}

	h2 {
		flex: 1;
		text-align: center;
		font-weight: 700;
	}

	.panebody {
		flex: 1;
		padding: 16px 12px 0 9px;
	}

	.panebody a {
		display: flex;
		align-items: center;
		gap: 2px;
		height: 17px;
		color: #666;
		text-decoration: none;
	}

	.panebody section {
		margin-bottom: 15px;
		border-top: 1px solid #999;
	}

	.panebody .welcome {
		margin-bottom: 15px;
	}

	h3 {
		display: flex;
		align-items: center;
		justify-content: space-between;
		height: 13px;
		padding: 0 4px 0 2px;
		font-weight: 700;
	}

	h3 svg {
		width: 6px;
	}

	.legend {
		display: flex;
		gap: 17px;
		justify-content: flex-end;
		padding: 0 18px 1px 0;
	}

	.legend span {
		width: 29px;
		height: 1px;
		background: #8caed4;
	}

	.legend span:last-child {
		background: #b48bd6;
	}

	/* Selection filter bar */
	footer {
		display: flex;
		align-items: center;
		height: 16px;
		padding-left: 9px;
	}

	.selection {
		display: flex;
		align-items: center;
		gap: 2px;
		padding-right: 4px;
		border-right: 1px solid var(--line);
	}

	.selection .active {
		width: 18px;
		height: 13px;
		background: #b3b3b3;
	}

	.filters {
		display: flex;
		justify-content: space-between;
		width: 42vw;
		padding: 0 9px 0 5px;
		box-sizing: border-box;
		border-right: 1px solid var(--line);
	}
</style>
